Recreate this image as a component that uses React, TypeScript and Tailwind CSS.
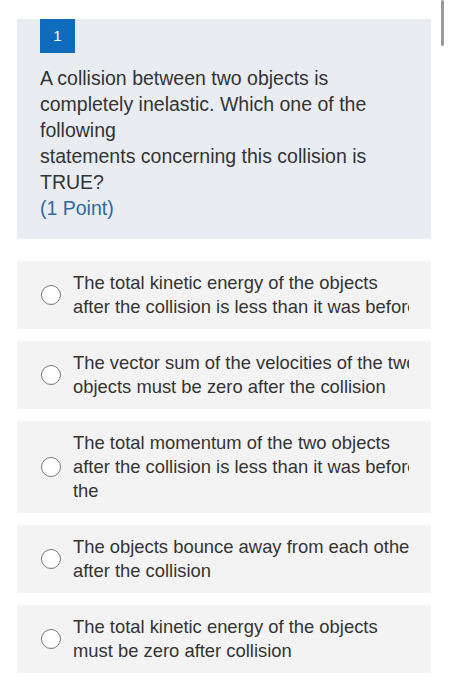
const options = [
  ['The total kinetic energy of the objects', 'after the collision is less than it was before'],
  ['The vector sum of the velocities of the two', 'objects must be zero after the collision'],
  ['The total momentum of the two objects', 'after the collision is less than it was before', 'the'],
  ['The objects bounce away from each other', 'after the collision'],
  ['The total kinetic energy of the objects', 'must be zero after collision'],
];

export default function App() {
  return (
    <div
      className="relative h-[700px] w-[449px] overflow-hidden bg-white text-[#333333]"
      style={{ fontFamily: '"Liberation Sans", Arial, sans-serif' }}
    >
      {/* scrollbar thumb */}
      <div className="absolute left-[441px] top-0 h-[46px] w-[3px] rounded-full bg-[#9a9a9a]" />

      <div className="flex flex-col gap-3 pl-[17px] pr-[18px] pt-[19px]">
        {/* Question card */}
        <div className="mb-[10px] h-[220px] bg-[#e9edf2] pl-[23px] pr-4">
          <div className="flex h-[34px] w-[35px] items-center justify-center bg-[#0f6cbd] text-[15px] text-white">
            1
          </div>
          <div className="mt-[12px] text-[19.5px] leading-[26px]">
            A collision between two objects is<br />
            completely inelastic. Which one of the<br />
            following<br />
            statements concerning this collision is<br />
            TRUE?
          </div>
          <div className="text-[19.5px] leading-[26px] text-[#2d6a9f]">(1 Point)</div>
        </div>

        {options.map((lines, i) => (
          <div key={i} className="flex items-center bg-[#f3f3f3] pl-[24px] pr-[22px] py-[10px]">
            <div className="h-[20px] w-[20px] shrink-0 rounded-full border-[1.5px] border-[#7a7a7a] bg-white" />
            <div className="ml-[12px] flex-1 overflow-hidden">
              {lines.map((l) => (
                <div key={l} className="whitespace-nowrap text-[18.4px] leading-[24px]">
                  {l}
                </div>
              ))}
            </div>
          </div>
        ))}
      </div>
    </div>
  );
}
